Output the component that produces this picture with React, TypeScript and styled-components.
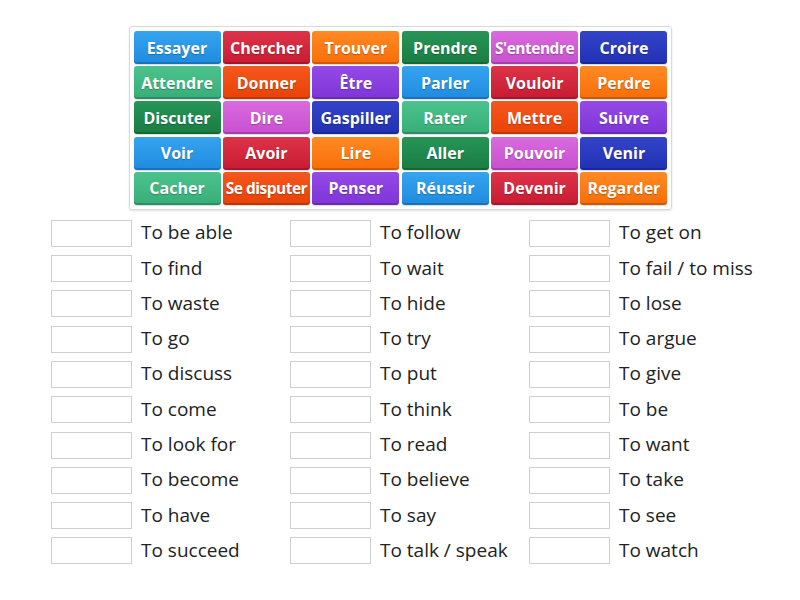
import React from 'react';
import styled, { createGlobalStyle } from 'styled-components';

const GlobalStyle = createGlobalStyle`
  body {
    margin: 0;
    background: #fff;
    font-family: 'Open Sans', 'Liberation Sans', sans-serif;
  }
`;

const tiles = [
  'Essayer', 'Chercher', 'Trouver', 'Prendre', "S'entendre", 'Croire',
  'Attendre', 'Donner', 'Être', 'Parler', 'Vouloir', 'Perdre',
  'Discuter', 'Dire', 'Gaspiller', 'Rater', 'Mettre', 'Suivre',
  'Voir', 'Avoir', 'Lire', 'Aller', 'Pouvoir', 'Venir',
  'Cacher', 'Se disputer', 'Penser', 'Réussir', 'Devenir', 'Regarder',
];

// top / bottom shades for each tile colour, cycling every 9 tiles
const palette = [
  ['#35a4ee', '#1f8be0'],
  ['#dd3347', '#c81b33'],
  ['#ff8a24', '#f86d08'],
  ['#279557', '#1a7c42'],
  ['#d96ade', '#c94fcf'],
  ['#3344c8', '#2231b4'],
  ['#4cc38d', '#37ad78'],
  ['#f5571c', '#e84208'],
  ['#944ae6', '#7f34d8'],
];

const columns = [
  ['To be able', 'To find', 'To waste', 'To go', 'To discuss', 'To come', 'To look for', 'To become', 'To have', 'To succeed'],
  ['To follow', 'To wait', 'To hide', 'To try', 'To put', 'To think', 'To read', 'To believe', 'To say', 'To talk / speak'],
  ['To get on', 'To fail / to miss', 'To lose', 'To argue', 'To give', 'To be', 'To want', 'To take', 'To see', 'To watch'],
];

const Page = styled.div`
  width: 800px;
  height: 600px;
  padding-top: 26px;
  box-sizing: border-box;
`;

const TileBoard = styled.div`
  width: 533px;
  margin: 0 auto;
  padding: 4px;
  border: 1px solid #d9d9d9;
  border-radius: 3px;
  box-shadow: 0 1px 2px rgba(0, 0, 0, 0.12);
  display: grid;
  grid-template-columns: repeat(6, 87px);
  grid-auto-rows: 33px;
  column-gap: 2.4px;
  row-gap: 2.2px;
`;

const Tile = styled.div<{ $top: string; $bottom: string; $small?: boolean }>`
  display: flex;
  align-items: center;
  justify-content: center;
  border-radius: 3px;
  background: linear-gradient(${p => p.$top}, ${p => p.$bottom});
  box-shadow: inset 0 -2px 0 rgba(0, 0, 0, 0.18), 0 1px 1px rgba(0, 0, 0, 0.15);
  color: #fff;
  font-weight: 700;
  font-size: ${p => (p.$small ? '15.5px' : '16px')};
  letter-spacing: ${p => (p.$small ? '-0.5px' : '0')};
  white-space: nowrap;
  overflow: hidden;
  text-shadow: 0 1px 1px rgba(0, 0, 0, 0.25);
`;

const Answers = styled.div`
  display: grid;
  grid-template-columns: repeat(3, 239px);
  margin: 10px 0 0 51px;
`;

const Column = styled.div`
  display: flex;
  flex-direction: column;
  gap: 8.3px;
`;

const Row = styled.div`
  display: flex;
  align-items: center;
  gap: 9px;
  height: 27px;
`;

const Slot = styled.div`
  width: 79px;
  height: 25px;
  border: 1px solid #cfcfcf;
  flex-shrink: 0;
`;

const Label = styled.span`
  font-size: 19px;
  color: #222;
  white-space: nowrap;
  margin-top: -2px;
`;

export default function App() {
  return (
    <Page>
      <GlobalStyle />
      <TileBoard>
        {tiles.map((t, i) => {
          const [top, bottom] = palette[i % 9];
          return (
            <Tile key={t} $top={top} $bottom={bottom} $small={t === 'Se disputer' || t === "S'entendre"}>
              {t}
            </Tile>
          );
        })}
      </TileBoard>
      <Answers>
        {columns.map((col, c) => (
          <Column key={c}>
            {col.map(label => (
              <Row key={label}>
                <Slot />
                <Label>{label}</Label>
              </Row>
            ))}
          </Column>
        ))}
      </Answers>
    </Page>
  );
}
